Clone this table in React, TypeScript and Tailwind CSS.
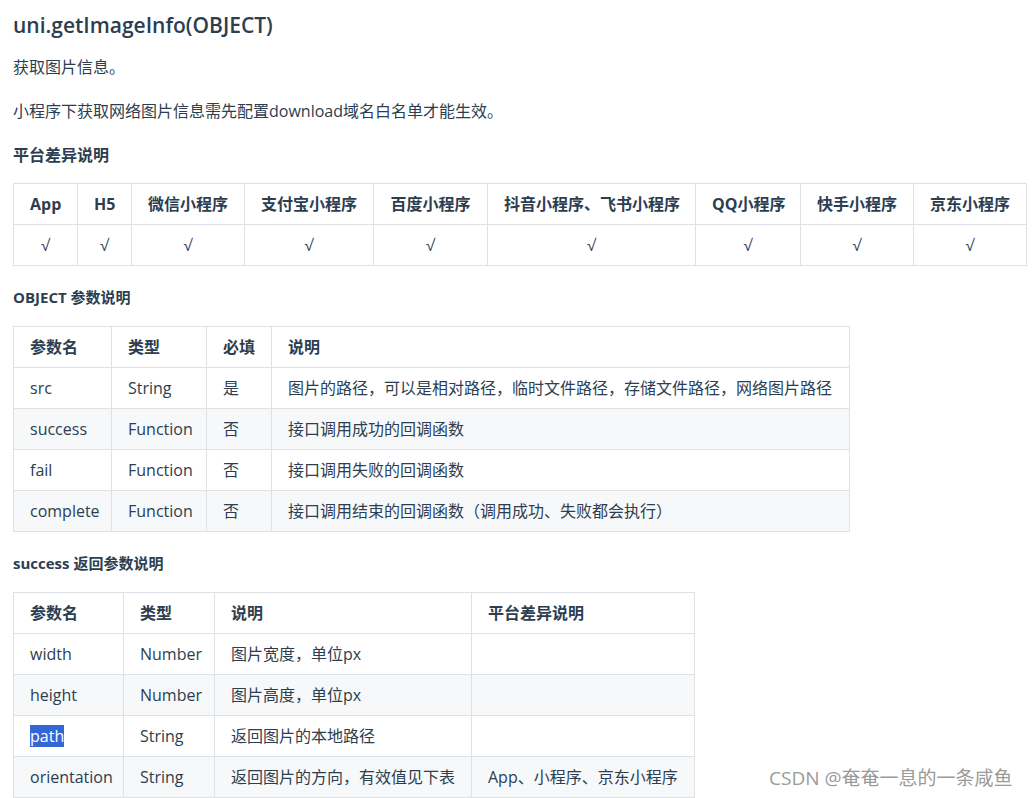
import React from "react";

const font = {
  fontFamily: '"Open Sans", "Noto Sans CJK SC", sans-serif',
};

const cell = "border border-[#dfe2e5] px-4 h-[41px] p-0";

function Table1() {
  const heads = ["App", "H5", "微信小程序", "支付宝小程序", "百度小程序", "抖音小程序、飞书小程序", "QQ小程序", "快手小程序", "京东小程序"];
  const widths = ["w-[64px]", "w-[54px]", "w-[113px]", "w-[129px]", "w-[114px]", "w-[208px]", "w-[105px]", "w-[113px]", "w-[113px]"];
  return (
    <table className="border-collapse table-fixed w-[1014px] text-[16px]">
      <colgroup>
        {widths.map((w, i) => (
          <col key={i} className={w} />
        ))}
      </colgroup>
      <thead>
        <tr>
          {heads.map((h) => (
            <th key={h} className={`${cell} font-bold text-center whitespace-nowrap px-0`}>
              {h}
            </th>
          ))}
        </tr>
      </thead>
      <tbody>
        <tr>
          {heads.map((h) => (
            <td key={h} className={`${cell} text-center text-[#34495e] px-0`}>
              √
            </td>
          ))}
        </tr>
      </tbody>
    </table>
  );
}

function DataTable({
  widths,
  tableW,
  heads,
  rows,
}: {
  widths: string[];
  tableW: string;
  heads: string[];
  rows: React.ReactNode[][];
}) {
  return (
    <table className={`border-collapse table-fixed ${tableW} text-[16px]`}>
      <colgroup>
        {widths.map((w, i) => (
          <col key={i} className={w} />
        ))}
      </colgroup>
      <thead>
        <tr>
          {heads.map((h) => (
            <th key={h} className={`${cell} font-bold text-left whitespace-nowrap`}>
              {h}
            </th>
          ))}
        </tr>
      </thead>
      <tbody>
        {rows.map((r, i) => (
          <tr key={i} className={i % 2 === 1 ? "bg-[#f6f8fa]" : "bg-white"}>
            {r.map((c, j) => (
              <td key={j} className={`${cell} text-left whitespace-nowrap text-[#2c3e50]`}>
                {c}
              </td>
            ))}
          </tr>
        ))}
      </tbody>
    </table>
  );
}

export default function App() {
  return (
    <div className="relative w-[1036px] h-[798px] overflow-hidden bg-white text-[#2c3e50]" style={font}>
      <div className="pl-[13px] pt-[10px]">
        <h1 className="text-[21px] leading-[30px] font-semibold">uni.getImageInfo(OBJECT)</h1>
        <p className="mt-[13px] text-[16px] leading-[28px]">获取图片信息。</p>
        <p className="mt-[16px] text-[16px] leading-[28px]">小程序下获取网络图片信息需先配置download域名白名单才能生效。</p>
        <p className="mt-[16px] text-[16px] leading-[28px] font-bold">平台差异说明</p>
        <div className="mt-[14px]">
          <Table1 />
        </div>
        <p className="mt-[17px] text-[15px] leading-[28px] font-bold">OBJECT 参数说明</p>
        <div className="mt-[15px]">
          <DataTable
            tableW="w-[836px]"
            widths={["w-[98px]", "w-[95px]", "w-[65px]", "w-[578px]"]}
            heads={["参数名", "类型", "必填", "说明"]}
            rows={[
              ["src", "String", "是", "图片的路径，可以是相对路径，临时文件路径，存储文件路径，网络图片路径"],
              ["success", "Function", "否", "接口调用成功的回调函数"],
              ["fail", "Function", "否", "接口调用失败的回调函数"],
              ["complete", "Function", "否", "接口调用结束的回调函数（调用成功、失败都会执行）"],
            ]}
          />
        </div>
        <p className="mt-[17px] text-[15px] leading-[28px] font-bold">success 返回参数说明</p>
        <div className="mt-[15px]">
          <DataTable
            tableW="w-[681px]"
            widths={["w-[110px]", "w-[91px]", "w-[257px]", "w-[223px]"]}
            heads={["参数名", "类型", "说明", "平台差异说明"]}
            rows={[
              ["width", "Number", "图片宽度，单位px", ""],
              ["height", "Number", "图片高度，单位px", ""],
              [<span className="bg-[#3367d6] text-white">path</span>, "String", "返回图片的本地路径", ""],
              ["orientation", "String", "返回图片的方向，有效值见下表", "App、小程序、京东小程序"],
            ]}
          />
        </div>
      </div>
      <div
        className="absolute left-[769px] top-[764px] text-[19px] text-[#9a9a9a] whitespace-nowrap"
        style={{ textShadow: "0 0 2px #fff, 0 0 2px #fff" }}
      >
        CSDN @奄奄一息的一条咸鱼
      </div>
    </div>
  );
}
